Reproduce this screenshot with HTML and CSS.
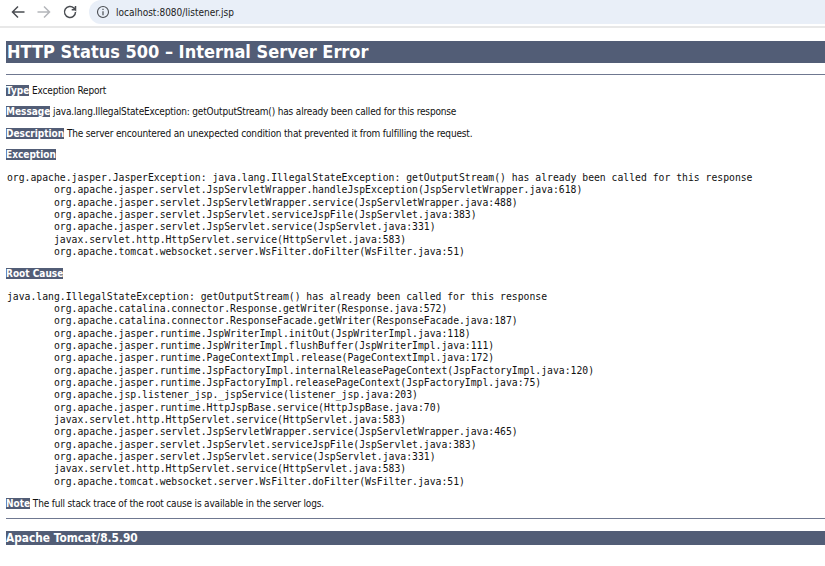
FILE: index.html
```html
<!DOCTYPE html>
<html lang="en">
<head>
<meta charset="utf-8">
<title>HTTP Status 500 – Internal Server Error</title>
<link rel="stylesheet" href="styles.css">
</head>
<body>
<div class="toolbar">
  <div class="nav">
    <svg class="nav-icon" viewBox="0 0 16 16"><path d="M14.5 8H2.5M8 2.5L2.5 8 8 13.5" fill="none" stroke="#4a4d52" stroke-width="1.5"/></svg>
    <svg class="nav-icon" viewBox="0 0 16 16"><path d="M1.5 8h12M8 2.5L13.5 8 8 13.5" fill="none" stroke="#b4b6ba" stroke-width="1.5"/></svg>
    <svg class="nav-icon" viewBox="0 0 16 16"><path d="M13.5 8a5.5 5.5 0 1 1-1.6-3.9L13.5 5.8V2M13.5 5.8H9.7" fill="none" stroke="#4a4d52" stroke-width="1.5"/></svg>
  </div>
  <div class="omnibox">
    <svg class="info" viewBox="0 0 14 14"><circle cx="7" cy="7" r="5.5" fill="none" stroke="#4a4d52" stroke-width="1.1"/><path d="M7 6.2v4M7 3.8v1.3" stroke="#4a4d52" stroke-width="1.2"/></svg>
    <span class="url">localhost:8080/listener.jsp</span>
  </div>
</div>
<main class="page">
<h1>HTTP Status 500 – Internal Server Error</h1>
<hr class="line line-top">
<p><b>Type</b> Exception Report</p>
<p><b>Message</b> java.lang.IllegalStateException: getOutputStream() has already been called for this response</p>
<p><b>Description</b> The server encountered an unexpected condition that prevented it from fulfilling the request.</p>
<p><b>Exception</b></p>
<pre>org.apache.jasper.JasperException: java.lang.IllegalStateException: getOutputStream() has already been called for this response
	org.apache.jasper.servlet.JspServletWrapper.handleJspException(JspServletWrapper.java:618)
	org.apache.jasper.servlet.JspServletWrapper.service(JspServletWrapper.java:488)
	org.apache.jasper.servlet.JspServlet.serviceJspFile(JspServlet.java:383)
	org.apache.jasper.servlet.JspServlet.service(JspServlet.java:331)
	javax.servlet.http.HttpServlet.service(HttpServlet.java:583)
	org.apache.tomcat.websocket.server.WsFilter.doFilter(WsFilter.java:51)
</pre>
<p><b>Root Cause</b></p>
<pre>java.lang.IllegalStateException: getOutputStream() has already been called for this response
	org.apache.catalina.connector.Response.getWriter(Response.java:572)
	org.apache.catalina.connector.ResponseFacade.getWriter(ResponseFacade.java:187)
	org.apache.jasper.runtime.JspWriterImpl.initOut(JspWriterImpl.java:118)
	org.apache.jasper.runtime.JspWriterImpl.flushBuffer(JspWriterImpl.java:111)
	org.apache.jasper.runtime.PageContextImpl.release(PageContextImpl.java:172)
	org.apache.jasper.runtime.JspFactoryImpl.internalReleasePageContext(JspFactoryImpl.java:120)
	org.apache.jasper.runtime.JspFactoryImpl.releasePageContext(JspFactoryImpl.java:75)
	org.apache.jsp.listener_jsp._jspService(listener_jsp.java:203)
	org.apache.jasper.runtime.HttpJspBase.service(HttpJspBase.java:70)
	javax.servlet.http.HttpServlet.service(HttpServlet.java:583)
	org.apache.jasper.servlet.JspServletWrapper.service(JspServletWrapper.java:465)
	org.apache.jasper.servlet.JspServlet.serviceJspFile(JspServlet.java:383)
	org.apache.jasper.servlet.JspServlet.service(JspServlet.java:331)
	javax.servlet.http.HttpServlet.service(HttpServlet.java:583)
	org.apache.tomcat.websocket.server.WsFilter.doFilter(WsFilter.java:51)
</pre>
<p class="note"><b>Note</b> The full stack trace of the root cause is available in the server logs.</p>
<hr class="line line-end">
<h3>Apache Tomcat/8.5.90</h3>
</main>
</body>
</html>
```
FILE: styles.css
```css
* { box-sizing: border-box; }
html, body { margin: 0; padding: 0; background: #fff; overflow: hidden; }
body { width: 825px; height: 566px; font-family: "DejaVu Sans Condensed", "DejaVu Sans", sans-serif; color: #111; }

.toolbar { height: 28px; display: flex; align-items: flex-start; border-bottom: 2px solid #e8e8e8; }
.nav { width: 89px; height: 24px; display: flex; align-items: center; gap: 10px; padding-left: 10px; flex: none; }
.nav-icon { width: 16px; height: 16px; flex: none; }
.omnibox { flex: 1; height: 24px; background: #e9eff8; border-radius: 12px 0 0 12px; display: flex; align-items: center; padding-left: 7px; gap: 6px; }
.info { width: 14px; height: 14px; flex: none; }
.url { font-size: 10px; color: #222; font-family: "DejaVu Sans Condensed", sans-serif; font-stretch: condensed; }

.page { padding: 13px 0 0 6px; }
h1 { margin: 0; height: 22px; line-height: 22px; background: #525d76; color: #fff; font-family: "DejaVu Sans Condensed", sans-serif; font-stretch: condensed; font-size: 18px; font-weight: bold; padding-left: 1px; }
.line { height: 1px; border: 0; margin: 11px 0 0; background: #6f7890; }
.line-top { margin-bottom: 0.6px; }
p { margin: 0; height: 12px; line-height: 12px; font-size: 10px; letter-spacing: -0.17px; margin-top: 9.6px; font-stretch: condensed; }
b { background: #525d76; color: #fff; font-weight: bold; letter-spacing: 0; }
pre { margin: 10.7px 0 0; padding-left: 1px; font-family: "DejaVu Sans Mono", monospace; font-size: 9.76px; line-height: 12.33px; tab-size: 8; color: #111; }
.note { margin-top: 10px; }
.line-end { margin-top: 8px; }
h3 { margin: 12px 0 0; height: 14px; line-height: 14px; background: #525d76; color: #fff; font-family: "DejaVu Sans Condensed", sans-serif; font-stretch: condensed; font-size: 11.8px; font-weight: bold; }
```
